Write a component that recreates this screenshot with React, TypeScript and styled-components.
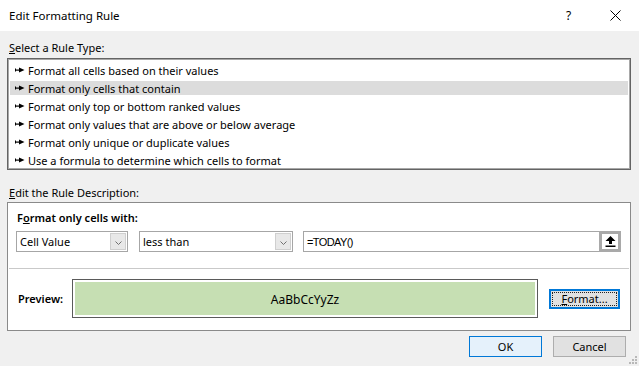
import styled, { createGlobalStyle } from "styled-components";

const GlobalStyle = createGlobalStyle`
  html, body {
    margin: 0;
    padding: 0;
    background: #f0f0f0;
  }
  body {
    font-family: "Noto Sans", "Liberation Sans", sans-serif;
    font-size: 11px;
    color: #000;
  }
`;

const ruleTypes = [
  "Format all cells based on their values",
  "Format only cells that contain",
  "Format only top or bottom ranked values",
  "Format only values that are above or below average",
  "Format only unique or duplicate values",
  "Use a formula to determine which cells to format",
];

function RuleArrow() {
  return (
    <svg width="10" height="8" viewBox="0 0 10 8">
      <rect x="0" y="2.5" width="1" height="3" fill="#000" />
      <rect x="0" y="3.5" width="5" height="1.2" fill="#000" />
      <polygon points="4,1.5 9.5,4 4,6.5" fill="#000" />
    </svg>
  );
}

function Chevron() {
  return (
    <svg width="7" height="4" viewBox="0 0 7 4">
      <polyline points="0.5,0.5 3.5,3.5 6.5,0.5" fill="none" stroke="#707070" strokeWidth="1" />
    </svg>
  );
}

function Select(params: { value: string; width: number }) {
  const { value, width } = params;
  return (
    <SelectBox style={{ width }}>
      <SelectText>{value}</SelectText>
      <SelectButton>
        <Chevron />
      </SelectButton>
    </SelectBox>
  );
}

function App() {
  return (
    <Dialog>
      <GlobalStyle />
      <TitleBar>
        <TitleText>Edit Formatting Rule</TitleText>
        <TitleActions>
          <HelpMark>?</HelpMark>
          <CloseMark>
            <svg width="11" height="11" viewBox="0 0 11 11">
              <path d="M0.5 0.5 L10.5 10.5 M10.5 0.5 L0.5 10.5" stroke="#000" strokeWidth="1" />
            </svg>
          </CloseMark>
        </TitleActions>
      </TitleBar>

      <Body>
        <SectionLabel>
          <u>S</u>elect a Rule Type:
        </SectionLabel>
        <RuleList>
          {ruleTypes.map((rule, i) => (
            <RuleRow key={rule} selected={i === 1}>
              <RuleArrow />
              <span>{rule}</span>
            </RuleRow>
          ))}
        </RuleList>

        <SectionLabel style={{ marginTop: 16 }}>
          <u>E</u>dit the Rule Description:
        </SectionLabel>
        <DescPanel>
          <CriteriaArea>
            <BoldLabel>
              F<u>o</u>rmat only cells with:
            </BoldLabel>
            <ControlsRow>
              <Select value="Cell Value" width={112} />
              <Select value="less than" width={154} />
              <FormulaBox>
                <FormulaText>=TODAY()</FormulaText>
                <CollapseButton>
                  <svg width="11" height="11" viewBox="0 0 11 11">
                    <polygon points="5.5,0 10.5,5 7,5 7,8 4,8 4,5 0.5,5" fill="#000" />
                    <rect x="0.5" y="9.5" width="10" height="1.5" fill="#000" />
                  </svg>
                </CollapseButton>
              </FormulaBox>
            </ControlsRow>
          </CriteriaArea>
          <Divider />
          <PreviewArea>
            <BoldLabel>Preview:</BoldLabel>
            <PreviewFrame>
              <PreviewFill>AaBbCcYyZz</PreviewFill>
            </PreviewFrame>
            <FormatButton>
              <FocusRing>
                <u>F</u>ormat...
              </FocusRing>
            </FormatButton>
          </PreviewArea>
        </DescPanel>

        <Footer>
          <DialogButton primary>OK</DialogButton>
          <DialogButton>Cancel</DialogButton>
        </Footer>
      </Body>
      <Grip>
        <svg width="8" height="8" viewBox="0 0 8 8">
          <rect x="6" y="0" width="2" height="2" fill="#b8b8b8" />
          <rect x="3" y="3" width="2" height="2" fill="#b8b8b8" />
          <rect x="6" y="3" width="2" height="2" fill="#b8b8b8" />
          <rect x="0" y="6" width="2" height="2" fill="#b8b8b8" />
          <rect x="3" y="6" width="2" height="2" fill="#b8b8b8" />
          <rect x="6" y="6" width="2" height="2" fill="#b8b8b8" />
        </svg>
      </Grip>
    </Dialog>
  );
}

const Dialog = styled.div`
  position: relative;
  width: 639px;
  height: 366px;
  background: #f0f0f0;
  overflow: hidden;
  display: flex;
  flex-direction: column;
`;

const TitleBar = styled.div`
  height: 31px;
  background: #fff;
  display: flex;
  align-items: center;
  justify-content: space-between;
  padding: 0 18px 0 9px;
  box-sizing: border-box;
`;

const TitleText = styled.div`
  font-size: 11.5px;
  padding-bottom: 1px;
`;

const TitleActions = styled.div`
  display: flex;
  align-items: center;
  gap: 36px;
`;

const HelpMark = styled.span`
  font-size: 12px;
  width: 8px;
`;

const CloseMark = styled.span`
  display: flex;
`;

const Body = styled.div`
  display: flex;
  flex-direction: column;
  padding: 0 8px 0 7px;
`;

const SectionLabel = styled.div`
  margin-top: 10px;
  padding-left: 2px;
  line-height: 14px;
  height: 14px;
`;

const RuleList = styled.div`
  margin-top: 3px;
  height: 112px;
  box-sizing: border-box;
  background: #fff;
  border: 1px solid #646464;
  box-shadow: inset 0 0 0 1px #a8a8a8;
  padding: 4px 2px 0;
  display: flex;
  flex-direction: column;
  gap: 4px;
`;

const RuleRow = styled.div<{ selected?: boolean }>`
  height: 14px;
  flex: none;
  padding-left: 5px;
  display: flex;
  align-items: center;
  gap: 3px;
  background: ${(p) => (p.selected ? "#dcdcdc" : "transparent")};
  white-space: nowrap;
`;

const DescPanel = styled.div`
  margin-top: 2px;
  height: 129px;
  box-sizing: border-box;
  background: #fff;
  border: 1px solid #8a8a8a;
  display: flex;
  flex-direction: column;
`;

const CriteriaArea = styled.div`
  padding: 8px 9px 0 8px;
  height: 65px;
  box-sizing: border-box;
`;

const BoldLabel = styled.div`
  font-weight: 600;
  line-height: 14px;
  padding-left: 1px;
  white-space: nowrap;
`;

const ControlsRow = styled.div`
  margin-top: 6px;
  display: flex;
  gap: 11px;
`;

const SelectBox = styled.div`
  height: 21px;
  box-sizing: border-box;
  border: 1px solid #a6a6a6;
  background: #fff;
  display: flex;
  align-items: center;
  padding: 0 1px 0 3px;
`;

const SelectText = styled.span`
  flex: 1;
`;

const SelectButton = styled.div`
  width: 16px;
  height: 17px;
  box-sizing: border-box;
  background: #e8e8e8;
  border: 1px solid #cfcfcf;
  display: flex;
  align-items: center;
  justify-content: center;
  padding-top: 2px;
`;

const FormulaBox = styled.div`
  flex: 1;
  margin-left: -1px;
  height: 21px;
  box-sizing: border-box;
  border: 1px solid #a6a6a6;
  border-right: none;
  background: #fff;
  display: flex;
  align-items: center;
`;

const FormulaText = styled.span`
  flex: 1;
  padding-left: 3px;
  font-family: "Liberation Sans", Arial, sans-serif;
  font-size: 11px;
  letter-spacing: -0.6px;
`;

const CollapseButton = styled.div`
  width: 22px;
  height: 21px;
  box-sizing: border-box;
  border: 3px solid #a9a9a9;
  background: #fff;
  display: flex;
  align-items: center;
  justify-content: center;
`;

const Divider = styled.div`
  height: 1px;
  margin: 0 1px;
  background: #c9c9c9;
`;

const PreviewArea = styled.div`
  flex: 1;
  display: flex;
  align-items: center;
  padding: 0 10px 2px 9px;
`;

const PreviewFrame = styled.div`
  margin-left: auto;
  width: 466px;
  height: 39px;
  box-sizing: border-box;
  border: 1px solid #5a5a5a;
  padding: 2px;
  background: #fff;
`;

const PreviewFill = styled.div`
  height: 100%;
  background: #c6dfb3;
  display: flex;
  align-items: center;
  justify-content: center;
  font-size: 12px;
  padding-top: 1px;
  box-sizing: border-box;
`;

const FormatButton = styled.div`
  margin-left: 11px;
  width: 71px;
  height: 20px;
  box-sizing: border-box;
  border: 2px solid #0078d7;
  background: #e1e1e1;
  padding: 1px;
`;

const FocusRing = styled.div`
  height: 100%;
  box-sizing: border-box;
  border: 1px dotted #222;
  display: flex;
  align-items: center;
  justify-content: center;
`;

const Footer = styled.div`
  margin-top: 5px;
  display: flex;
  justify-content: flex-end;
  gap: 11px;
  padding-right: 5px;
`;

const DialogButton = styled.div<{ primary?: boolean }>`
  width: 73px;
  height: 21px;
  box-sizing: border-box;
  border: 1px solid ${(p) => (p.primary ? "#0078d7" : "#adadad")};
  background: ${(p) => (p.primary ? "#e5f1fb" : "#e1e1e1")};
  display: flex;
  align-items: center;
  justify-content: center;
`;

const Grip = styled.div`
  position: absolute;
  right: 2px;
  bottom: 2px;
  display: flex;
`;

export default App;
